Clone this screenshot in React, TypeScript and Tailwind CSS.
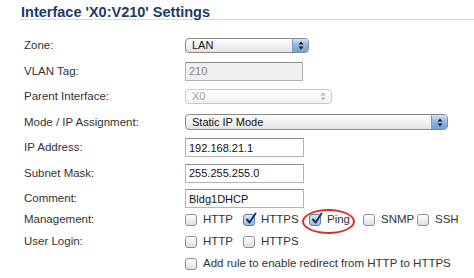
function Arrows({ muted }: { muted?: boolean }) {
  const c = muted ? '#b5b5b5' : '#1a1a1a';
  return (
    <svg width="6" height="9" viewBox="0 0 6 9">
      <path d="M0.5 3.5 L3 0.5 L5.5 3.5Z" fill={c} />
      <path d="M0.5 5.5 L3 8.5 L5.5 5.5Z" fill={c} />
    </svg>
  );
}

function Select({ value, w, h, disabled }: { value: string; w: string; h: string; disabled?: boolean }) {
  return (
    <div
      className={`flex items-center rounded-[4px] border ${w} ${h} ${
        disabled
          ? 'border-[#c9c9c9] bg-gradient-to-b from-white to-[#f1f1f1] text-[#a3a3a3]'
          : 'border-[#8a8a8a] bg-gradient-to-b from-white to-[#e3e3e3] text-[#111]'
      }`}
    >
      <span className="flex-1 pl-[6px] text-[11px] leading-none">{value}</span>
      {disabled ? (
        <span className="flex h-full w-[16px] items-center justify-center">
          <Arrows muted />
        </span>
      ) : (
        <span className="flex h-full w-[16px] items-center justify-center rounded-r-[3px] border-l border-[#7d9bc4] bg-gradient-to-b from-[#d2e3f8] via-[#8fb6e8] to-[#6f9fe0]">
          <Arrows />
        </span>
      )}
    </div>
  );
}

function TextInput({ value, disabled }: { value: string; disabled?: boolean }) {
  return (
    <div
      className={`flex h-[19px] items-center border border-[#b4b4b4] border-t-[#8f8f8f] pl-[3px] text-[11px] ${
        disabled ? 'w-[118px] bg-[#efefef] text-[#8a8a8a]' : 'w-[119px] bg-white text-[#111]'
      }`}
    >
      {value}
    </div>
  );
}

function Box({ checked }: { checked?: boolean }) {
  return (
    <span
      className={`relative inline-block h-[12px] w-[12px] shrink-0 rounded-[3px] border ${
        checked
          ? 'border-[#5d7fae] bg-gradient-to-b from-[#dbe9fb] to-[#93bbec]'
          : 'border-[#8f8f8f] bg-gradient-to-b from-white to-[#dedede]'
      }`}
    >
      {checked && (
        <svg className="absolute left-[1px] top-[-3px]" width="12" height="13" viewBox="0 0 12 13">
          <path d="M2 7.5 L4.6 10.5 L10.5 1.5" fill="none" stroke="#1d2f5c" strokeWidth="2" strokeLinecap="round" strokeLinejoin="round" />
        </svg>
      )}
    </span>
  );
}

function Check({ label, checked, w }: { label: string; checked?: boolean; w?: string }) {
  return (
    <div className={`flex items-center gap-[6px] ${w ?? ''}`}>
      <Box checked={checked} />
      <span>{label}</span>
    </div>
  );
}

function Row({ label, children }: { label: string; children: React.ReactNode }) {
  return (
    <div className="flex h-[25.5px] items-center">
      <div className="w-[161px] shrink-0">{label}</div>
      {children}
    </div>
  );
}

function CheckRow({ label, children }: { label: string; children: React.ReactNode }) {
  return (
    <div className="flex h-[22px] items-center">
      <div className="w-[161px] shrink-0">{label}</div>
      <div className="flex items-center">{children}</div>
    </div>
  );
}

export default function App() {
  return (
    <div className="h-[278px] w-[474px] overflow-hidden bg-white font-['Liberation_Sans',Arial,sans-serif] text-[11.5px] text-[#333]">
      <div className="ml-[20px] h-[20px] border-b border-[#dadada]">
        <h1 className="pt-[3px] pl-[1px] text-[14.5px] font-bold leading-[18px] text-[#1d3a68]">
          Interface 'X0:V210' Settings
        </h1>
      </div>

      <div className="mt-[13px] pl-[24px]">
        <Row label="Zone:">
          <Select value="LAN" w="w-[124px]" h="h-[15px]" />
        </Row>
        <Row label="VLAN Tag:">
          <TextInput value="210" disabled />
        </Row>
        <Row label="Parent Interface:">
          <Select value="X0" w="w-[147px]" h="h-[15px]" disabled />
        </Row>
        <Row label="Mode / IP Assignment:">
          <Select value="Static IP Mode" w="w-[263px]" h="h-[16px]" />
        </Row>
        <Row label="IP Address:">
          <TextInput value="192.168.21.1" />
        </Row>
        <Row label="Subnet Mask:">
          <TextInput value="255.255.255.0" />
        </Row>
        <Row label="Comment:">
          <TextInput value="Bldg1DHCP" />
        </Row>

        <div className="-mt-[2.5px]">
          <CheckRow label="Management:">
            <Check label="HTTP" w="w-[58px]" />
            <Check label="HTTPS" checked w="w-[66px]" />
            <div className="relative w-[54px]">
              <Check label="Ping" checked />
              <span className="absolute left-[-7px] top-[-2px] h-[25px] w-[53px] rounded-[50%] border-2 border-[#d6302a]" />
            </div>
            <Check label="SNMP" w="w-[54px]" />
            <Check label="SSH" />
          </CheckRow>
          <CheckRow label="User Login:">
            <Check label="HTTP" w="w-[58px]" />
            <Check label="HTTPS" />
          </CheckRow>
          <CheckRow label="">
            <Check label="Add rule to enable redirect from HTTP to HTTPS" />
          </CheckRow>
        </div>
      </div>
    </div>
  );
}
